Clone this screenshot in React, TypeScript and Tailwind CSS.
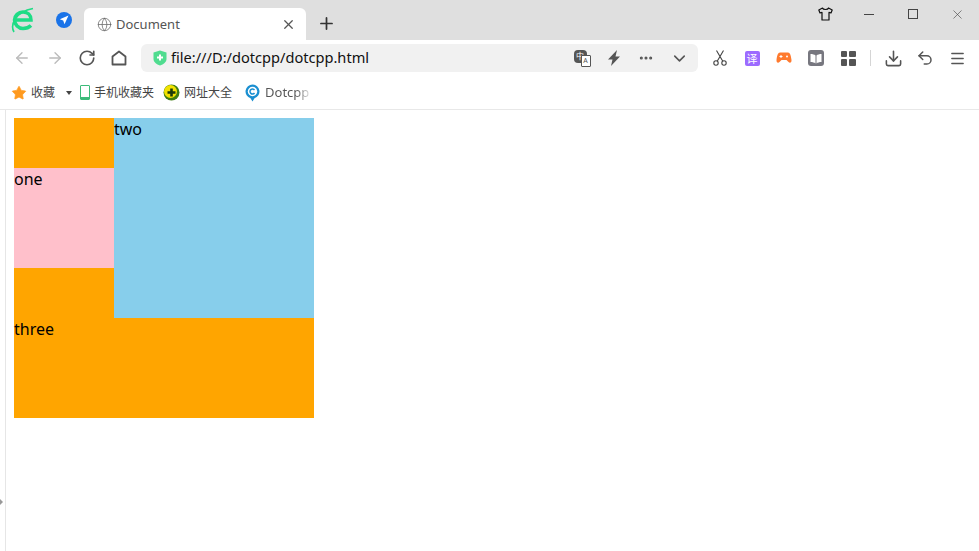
import { Globe, X, Plus, ArrowLeft, ArrowRight, RotateCw, Star, Download, Undo2, Menu, Ellipsis, ChevronDown } from "lucide-react"

const sans = "font-['Noto_Sans','Noto_Sans_CJK_SC',sans-serif]"

function TabBar() {
  return (
    <div className="flex h-10 bg-[#dfdfdf]">
      <div className="flex w-[44px] items-center justify-center pl-[1px]">
        <svg width="24" height="26" viewBox="0 0 24 26" fill="none" stroke="#1fdc86">
          <path d="M4 13h16c0-5-3.500-8-8-8s-8.500 3.500-8.500 8 4 8.500 8.500 8.500c3 0 6-1 8-3" strokeWidth="3.500" />
          <path d="M3 25C-1 18 4 5 22 1.500" strokeWidth="1.600" />
        </svg>
      </div>
      <div className="flex w-[40px] items-center justify-center">
        <div className="flex h-4 w-4 items-center justify-center rounded-full bg-[#1a73e8]">
          <svg width="10" height="10" viewBox="0 0 10 10" fill="#fff">
            <path d="M9.500 0.500 0.800 4.300 4.200 5.600 5.500 9.200z" />
          </svg>
        </div>
      </div>
      <div className="mt-2 flex h-8 w-[222px] items-center rounded-t-md bg-white pl-[13px] pr-[10px]">
        <Globe size={15} strokeWidth={1.2} className="text-[#666]" />
        <span className="ml-[4px] flex-1 pt-[1px] text-[13px] text-[#555]">Document</span>
        <X size={15} strokeWidth={2} className="text-[#555]" />
      </div>
      <div className="flex w-[40px] items-center justify-center pt-[7px]">
        <Plus size={19} strokeWidth={2.2} className="text-[#333]" />
      </div>
      <div className="flex-1" />
      <div className="flex h-7 items-center text-[#444]">
        <div className="flex w-[44px] justify-center">
          <svg width="15" height="14" viewBox="0 0 15 14" fill="none" stroke="#111" strokeWidth="1.200" strokeLinejoin="round">
            <path d="M4.500 1 .8 3 2 6 4 5.400V13h7V5.400L13 6l1.200-3L10.500 1C10 3 5 3 4.500 1z" />
          </svg>
        </div>
        <div className="flex w-[44px] justify-center">
          <div className="h-px w-[10px] bg-[#444]" />
        </div>
        <div className="flex w-[44px] justify-center">
          <div className="h-[10px] w-[10px] border border-[#444]" />
        </div>
        <div className="flex w-[44px] justify-center">
          <X size={15} strokeWidth={1} />
        </div>
      </div>
    </div>
  )
}

function ToolBar() {
  return (
    <div className="flex h-9 items-center bg-white">
      <div className="flex w-[141px] items-center gap-[14.500px] pl-[13px]">
        <ArrowLeft size={18} strokeWidth={1.8} className="text-[#bbb]" />
        <ArrowRight size={18} strokeWidth={1.8} className="text-[#bbb]" />
        <RotateCw size={18} strokeWidth={2.2} className="text-[#555]" />
        <svg width="16" height="16" viewBox="0 0 16 16" fill="none" stroke="#555" strokeWidth="1.800">
          <path d="M1.500 6.500 8 1.500l6.500 5V14.500H1.500z" strokeLinejoin="round" />
        </svg>
      </div>
      <div className="flex h-7 w-[557px] items-center rounded-md bg-[#f1f1f1] pl-3 pr-[2px]">
        <svg width="14" height="16" viewBox="0 0 14 16">
          <path d="M0.500 2.500 7 0.500l6.500 2V9c0 3-3 5.500-6.500 6.500C3.500 14.500 0.500 12 0.500 9z" fill="#4fdc8f" />
          <path d="M7 4.500v6M4 7.500h6" stroke="#fff" strokeWidth="2" />
        </svg>
        <span className="ml-[4px] flex-1 text-[14.600px] text-[#111]">file:///D:/dotcpp/dotcpp.html</span>
        <div className="flex items-center text-[#555]">
          <div className="flex w-[32px] justify-center">
            <div className="relative h-[17px] w-[17px]">
              <div className="flex h-[13px] w-[13px] items-center justify-center rounded-sm bg-[#555] text-[8px] leading-none text-white">中</div>
              <div className="absolute bottom-0 right-0 flex h-[12px] w-[10px] items-center justify-center rounded-[1px] border border-[#555] bg-white text-[7px] leading-none">A</div>
            </div>
          </div>
          <div className="flex w-[32px] justify-center">
            <svg width="12" height="16" viewBox="0 0 12 16" fill="#555">
              <path d="M9 0 0 9.500h4.500L3 16l9-9.500H7.500z" />
            </svg>
          </div>
          <div className="flex w-[32px] justify-center">
            <Ellipsis size={16} strokeWidth={2.6} />
          </div>
          <div className="flex w-[34px] justify-center">
            <ChevronDown size={19} strokeWidth={2} />
          </div>
        </div>
      </div>
      <div className="flex items-center pl-[6px] text-[#555]">
        <div className="flex w-[32px] justify-center">
          <svg width="14" height="16" viewBox="0 0 14 16" fill="none" stroke="#444" strokeWidth="1.100">
            <circle cx="3" cy="13" r="2.200" />
            <circle cx="11" cy="13" r="2.200" />
            <path d="M4.200 11.200 10.500 0.500M9.800 11.200 3.500 0.500" />
          </svg>
        </div>
        <div className="flex w-[32px] justify-center">
          <div className="flex h-[15px] w-[15px] items-center justify-center rounded-[2px] bg-[#9c6bff] text-[11px] leading-none text-white">译</div>
        </div>
        <div className="flex w-[32px] justify-center">
          <svg width="16" height="12" viewBox="0 0 16 12">
            <path d="M4 0.500h8c2 0 3 3 3.500 7.500.2 2.500-1.500 3.500-3 2L10.500 8h-5L3.500 10c-1.500 1.500-3.200.5-3-2C1 3.500 2 .5 4 .5z" fill="#ff7a2e" />
            <path d="M3.500 4.500h3M5 3v3" stroke="#fff" strokeWidth="1" />
            <circle cx="11" cy="4.500" r="1" fill="#fff" />
          </svg>
        </div>
        <div className="flex w-[32px] justify-center">
          <div className="flex h-4 w-4 items-center justify-center rounded-[3px] bg-[#77777f]">
            <svg width="12" height="11" viewBox="0 0 12 11" fill="#fff">
              <path d="M0.500 1c2 0 4 .5 5 1.500V10.500C4.500 9.500 2.500 9 .5 9zM11.500 1c-2 0-4 .5-5 1.500V10.500c1-1 3-1.500 5-1.500z" />
            </svg>
          </div>
        </div>
        <div className="flex w-[32px] justify-center">
          <div className="grid grid-cols-2 gap-[2px]">
            <div className="h-[6.500px] w-[6.500px] rounded-[1px] bg-[#555]" />
            <div className="h-[6.500px] w-[6.500px] rounded-[1px] bg-[#555]" />
            <div className="h-[6.500px] w-[6.500px] rounded-[1px] bg-[#555]" />
            <div className="h-[6.500px] w-[6.500px] rounded-[1px] bg-[#555]" />
          </div>
        </div>
        <div className="ml-[6px] h-4 w-px bg-[#d5d5d5]" />
        <div className="ml-[6px] flex w-[32px] justify-center">
          <Download size={19} strokeWidth={2} />
        </div>
        <div className="flex w-[32px] justify-center">
          <Undo2 size={18} strokeWidth={2} />
        </div>
        <div className="flex w-[32px] justify-center">
          <Menu size={17} strokeWidth={2} />
        </div>
      </div>
    </div>
  )
}

function BookmarkBar() {
  return (
    <div className="flex h-[34px] items-center border-b border-[#e8e8e8] bg-white pl-[11px] text-[12px] text-[#444]">
      <Star size={16} fill="#ff9a1f" strokeWidth={1} className="text-[#ff9a1f]" />
      <span className="ml-[4px]">收藏</span>
      <div className="ml-[11px] h-0 w-0 border-x-[3px] border-t-[4px] border-x-transparent border-t-[#444]" />
      <div className="ml-[8px] flex h-[15px] w-[10px] items-end rounded-[1px] border border-[#3dbb7a]">
        <div className="h-[2px] w-full bg-[#3dbb7a]" />
      </div>
      <span className="ml-[4px]">手机收藏夹</span>
      <svg width="17" height="17" viewBox="0 0 17 17" className="ml-[9px]">
        <circle cx="8.500" cy="8.500" r="8" fill="#3f7d12" />
        <circle cx="7.500" cy="7.500" r="6.500" fill="#f2e200" />
        <path d="M8.500 4.500v8M4.500 8.500h8" stroke="#1c3a0a" strokeWidth="2.600" />
      </svg>
      <span className="ml-[4px]">网址大全</span>
      <svg width="15" height="18" viewBox="0 0 15 18" className="ml-[13px]">
        <path d="M7.500 0.500a7 7 0 0 1 2 13.700L7.500 17.500l-2-3.300a7 7 0 0 1 2-13.700z" fill="#1a8fd1" />
        <circle cx="7.500" cy="7.500" r="4.700" fill="#fff" />
        <path d="M9.500 6a2.500 2.500 0 1 0 0 3" fill="none" stroke="#1a8fd1" strokeWidth="1.500" />
      </svg>
      <span className="ml-[5px] bg-gradient-to-r from-[#555] from-70% to-[#ddd] bg-clip-text text-[13px] text-transparent">Dotcpp</span>
    </div>
  )
}

export default function App() {
  return (
    <div className={`flex h-[551px] w-[979px] flex-col overflow-hidden bg-white ${sans}`}>
      <TabBar />
      <ToolBar />
      <BookmarkBar />
      <div className="flex flex-1">
        <div className="flex w-[6px] items-end border-r border-[#e6e6e6] pb-[46px]">
          <div className="h-0 w-0 border-y-[3px] border-l-[3px] border-y-transparent border-l-[#999]" />
        </div>
        <main className="pl-2 pt-2 text-[16px] leading-[22px] text-black">
          <div className="h-[300px] w-[300px] bg-[#ffa500]">
            <div className="flex h-[200px]">
              <div className="w-[100px] pt-[50px]">
                <div className="h-[100px] bg-[#ffc0cb]">one</div>
              </div>
              <div className="h-[200px] w-[200px] bg-[#87ceeb]">two</div>
            </div>
            <div>three</div>
          </div>
        </main>
      </div>
    </div>
  )
}
